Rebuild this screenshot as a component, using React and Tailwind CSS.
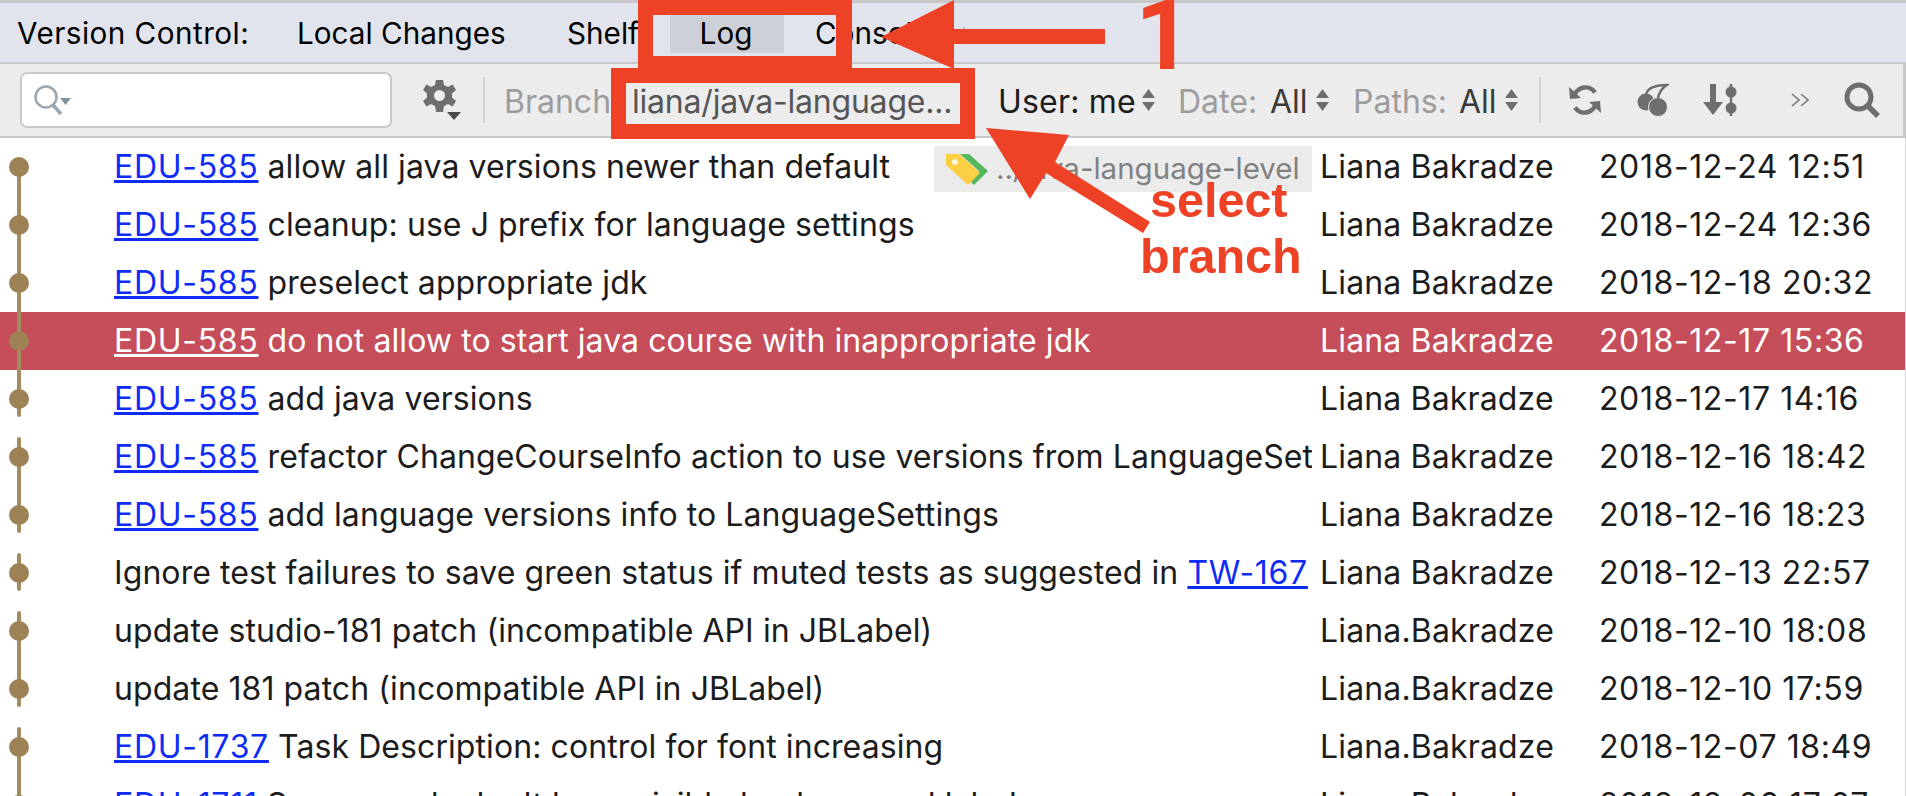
import React from "react";

const rows = [
  { l: "EDU-585", t: "allow all java versions newer than default", a: "Liana Bakradze", d: "2018-12-24 12:51", up: 0, dn: 2, tag: true },
  { l: "EDU-585", t: "cleanup: use J prefix for language settings", a: "Liana Bakradze", d: "2018-12-24 12:36", up: 2, dn: 2 },
  { l: "EDU-585", t: "preselect appropriate jdk", a: "Liana Bakradze", d: "2018-12-18 20:32", up: 2, dn: 2 },
  { l: "EDU-585", t: "do not allow to start java course with inappropriate jdk", a: "Liana Bakradze", d: "2018-12-17 15:36", up: 2, dn: 2, sel: true },
  { l: "EDU-585", t: "add java versions", a: "Liana Bakradze", d: "2018-12-17 14:16", up: 2, dn: 1 },
  { l: "EDU-585", t: "refactor ChangeCourseInfo action to use versions from LanguageSettings", a: "Liana Bakradze", d: "2018-12-16 18:42", up: 1, dn: 2 },
  { l: "EDU-585", t: "add language versions info to LanguageSettings", a: "Liana Bakradze", d: "2018-12-16 18:23", up: 2, dn: 1 },
  { t: "Ignore test failures to save green status if muted tests as suggested in", l2: "TW-167", a: "Liana Bakradze", d: "2018-12-13 22:57", up: 1, dn: 1 },
  { t: "update studio-181 patch (incompatible API in JBLabel)", a: "Liana.Bakradze", d: "2018-12-10 18:08", up: 1, dn: 2 },
  { t: "update 181 patch (incompatible API in JBLabel)", a: "Liana.Bakradze", d: "2018-12-10 17:59", up: 2, dn: 1 },
  { l: "EDU-1737", t: "Task Description: control for font increasing", a: "Liana.Bakradze", d: "2018-12-07 18:49", up: 1, dn: 2 },
  { l: "EDU-1711", t: "Some words don't have visible hyphens and labels", a: "Liana.Bakradze", d: "2018-12-06 17:07", up: 2, dn: 2 },
];

function Graph({ up, dn }) {
  const c = "#a38d60";
  return (
    <svg width="40" height="58" className="block shrink-0">
      {up === 2 && <line x1="19" x2="19" y1="0" y2="29" stroke={c} strokeWidth="4" />}
      {up === 1 && <line x1="19" x2="19" y1="11" y2="29" stroke={c} strokeWidth="4" strokeLinecap="round" />}
      {dn === 2 && <line x1="19" x2="19" y1="29" y2="58" stroke={c} strokeWidth="4" />}
      {dn === 1 && <line x1="19" x2="19" y1="29" y2="45" stroke={c} strokeWidth="4" strokeLinecap="round" />}
      <circle cx="19" cy="29" r="10" fill="#9c8254" />
    </svg>
  );
}

function TagIcon() {
  return (
    <svg width="44" height="32" viewBox="0 0 44 32" className="shrink-0">
      <path d="M15 1 L24 1 L43 18 L29 32 L24 27 L34 18 Z" fill="#55b85f" />
      <path d="M1 1 L14 1 L35 20 L23 32 L1 12 Z" fill="#fdd043" />
      <circle cx="10" cy="9" r="3" fill="#f7f3de" />
    </svg>
  );
}

function UpDown() {
  return (
    <svg width="13" height="24" viewBox="0 0 13 24" className="block shrink-0">
      <path d="M6.5 1 L13 10 L0 10 Z M0 14 L13 14 L6.5 23 Z" fill="#6e6e6e" />
    </svg>
  );
}

function Row({ r }) {
  const linkCls = r.sel ? "underline text-white tracking-[0.7px]" : "underline text-[#0f2cf5] tracking-[0.7px]";
  return (
    <div className={`flex items-center h-[58px] shrink-0 ${r.sel ? "bg-[#c64e5b] text-white" : "text-[#1c1c1c]"}`}>
      <div className="w-[114px] shrink-0">
        <Graph up={r.up} dn={r.dn} />
      </div>
      <div className="relative w-[1198px] shrink-0 overflow-hidden whitespace-nowrap h-[58px] leading-[58px] tracking-[0.08px]">
        {r.l && <span className={linkCls}>{r.l}</span>}
        {r.l && " "}
        {r.t}
        {r.l2 && " "}
        {r.l2 && <span className={linkCls}>{r.l2}</span>}
        {r.tag && (
          <div className="absolute right-0 top-[8px] h-[46px] w-[378px] bg-[#ebebeb] flex items-center pl-[11px] text-[#808080] leading-none text-[29.5px] tracking-normal">
            <TagIcon />
            <span className="ml-[7px]">../java-language-level</span>
          </div>
        )}
      </div>
      <div className="w-[279px] ml-[8px] shrink-0 leading-[58px] whitespace-nowrap tracking-[0.15px]">{r.a}</div>
      <div className="shrink-0 leading-[58px] whitespace-nowrap tracking-[0.6px]">{r.d}</div>
    </div>
  );
}

function Annotations() {
  const red = "#ee4227";
  return (
    <>
      <svg width="1906" height="796" className="absolute left-0 top-0 pointer-events-none">
        <path fillRule="evenodd" fill={red} d="M638 0 H852 V69 H638 Z M653 15 V56 H836 V15 Z" />
        <path fillRule="evenodd" fill={red} d="M611 68 H975 V139 H611 Z M626 83 V124 H960 V83 Z" />
        <polygon fill={red} points="881,37 954,0 954,69" />
        <rect fill={red} x="950" y="29" width="155" height="15" />
        <polygon fill={red} points="986,128 1069,135 1055,162 1150,222 1143,233 1046,173 1030,199" />
      </svg>
      <div className="absolute left-[1135px] top-[-23px] text-[#ee4227] font-bold text-[100px] leading-[115px] [font-family:Roboto,sans-serif]">1</div>
      <div className="absolute left-[1150px] top-[173px] text-[#ee4227] font-bold text-[48.5px] leading-[55px] [font-family:'Liberation_Sans',sans-serif]">select</div>
      <div className="absolute left-[1140px] top-[229px] text-[#ee4227] font-bold text-[48.5px] leading-[55px] [font-family:'Liberation_Sans',sans-serif]">branch</div>
    </>
  );
}

export default function App() {
  return (
    <div className="relative w-[1906px] h-[796px] overflow-hidden bg-white text-[32px] [font-family:Inter,sans-serif] flex flex-col">
      {/* tab bar */}
      <div className="h-[64px] shrink-0 bg-[#e1e4ec] border-t-[3px] border-b-2 border-[#c8c8c8] flex items-center text-black text-[29.7px]">
        <div className="ml-[17px] w-[249px] shrink-0 whitespace-nowrap pt-[2px] tracking-[0.45px]">Version Control:</div>
        <div className="pl-[31px] w-[270px] h-[41px] flex items-center whitespace-nowrap pt-[2px]">Local Changes</div>
        <div className="pl-[31px] w-[134px] h-[41px] flex items-center whitespace-nowrap pt-[2px]">Shelf</div>
        <div className="w-[114px] h-[41px] flex items-center justify-center bg-[#cdd0d6] whitespace-nowrap pt-[2px] pr-[2px]">Log</div>
        <div className="pl-[31px] h-[41px] w-[165px] flex items-center whitespace-nowrap pt-[2px]">Console</div>
        <svg width="12" height="14" className="ml-[5px]"><path d="M1 13 L11 1" stroke="#b5b8bf" strokeWidth="1.5" /></svg>
      </div>

      {/* toolbar */}
      <div className="h-[74px] shrink-0 bg-[#ececec] border-b-2 border-r-[3px] border-[#c8c8c8] flex items-center whitespace-nowrap">
        <div className="ml-[20px] w-[372px] h-[56px] bg-white border-2 border-[#c9c9c9] rounded-[7px] flex items-center pl-[10px] shrink-0">
          <svg width="42" height="34" viewBox="0 0 42 34">
            <circle cx="14" cy="14" r="10.5" fill="none" stroke="#9aa7b0" strokeWidth="2.5" />
            <path d="M21 22 L29 31" stroke="#9aa7b0" strokeWidth="3.5" />
            <path d="M28 15 H39 L33.5 22 Z" fill="#84939c" />
          </svg>
        </div>
        <svg width="40" height="42" viewBox="0 0 40 42" className="ml-[31px] shrink-0">
          <g fill="#6e6e6e">
            <path fillRule="evenodd" d="M13 1 H20 L21 6 L25 8 L29.5 5.5 L33 11 L29 14.5 V18.5 L33 22 L29.5 27.5 L25 25 L21 27 L20 33 H13 L12 27 L8 25 L3.5 27.5 L0 22 L4 18.5 V14.5 L0 11 L3.5 5.5 L8 8 L12 6 Z M16.5 11 A5.5 5.5 0 1 0 16.50 22 A5.5 5.5 0 1 0 16.5 11 Z" />
          </g>
          <path d="M24 33 H38 L31 41 Z" fill="#4a4a4a" />
        </svg>
        <div className="ml-[20px] w-[2px] h-[46px] bg-[#d2d2d2] shrink-0" />
        <div className="ml-[19px] w-[107px] overflow-hidden text-[#9c9c9c] shrink-0 pt-[3px]">Branch:</div>
        <div className="ml-[21px] w-[331px] text-[#555555] shrink-0 tracking-[-0.2px] pt-[3px]">liana/java-language...</div>
        <div className="ml-[35px] w-[135px] text-[#1c1c1c] shrink-0 pt-[3px] tracking-[0.2px]">User: me</div>
        <div className="ml-[9px] shrink-0"><UpDown /></div>
        <div className="ml-[23px] w-[79px] text-[#9c9c9c] shrink-0 pt-[3px]">Date:</div>
        <div className="ml-[13px] w-[36px] text-[#3a3a3a] shrink-0 pt-[3px]">All</div>
        <div className="ml-[10px] shrink-0"><UpDown /></div>
        <div className="ml-[24px] w-[93px] text-[#9c9c9c] shrink-0 pt-[3px]">Paths:</div>
        <div className="ml-[13px] w-[36px] text-[#3a3a3a] shrink-0 pt-[3px]">All</div>
        <div className="ml-[10px] shrink-0"><UpDown /></div>
        <div className="ml-[21px] w-[2px] h-[46px] bg-[#d2d2d2] shrink-0" />
        <svg width="32" height="32" viewBox="0 0 32 32" className="ml-[28px] shrink-0">
          <path d="M5 14 A11.5 11.5 0 0 1 26 8.5" fill="none" stroke="#6e6e6e" strokeWidth="4.5" />
          <path d="M0 3 L1 15 L12 14 Z" fill="#6e6e6e" />
          <path d="M27 18 A11.5 11.5 0 0 1 6 23.5" fill="none" stroke="#6e6e6e" strokeWidth="4.5" />
          <path d="M32 29 L31 17 L20 18 Z" fill="#6e6e6e" />
        </svg>
        <svg width="32" height="34" viewBox="0 0 32 34" className="ml-[36px] shrink-0">
          <circle cx="9" cy="19" r="8.5" fill="#6e6e6e" />
          <circle cx="21" cy="24" r="9.5" fill="#6e6e6e" stroke="#ececec" strokeWidth="1" />
          <path d="M9 11 C11 5 18 2 30 2 C25 5 22 10 21 15" fill="none" stroke="#6e6e6e" strokeWidth="2.5" />
        </svg>
        <svg width="34" height="32" viewBox="0 0 34 32" className="ml-[34px] shrink-0">
          <path d="M7 0 H13 V18 H20 L10 31 L0 18 H7 Z" fill="#6e6e6e" />
          <path d="M28 0 V32" stroke="#6e6e6e" strokeWidth="2.5" />
          <circle cx="28" cy="8" r="5.5" fill="#6e6e6e" />
          <circle cx="28" cy="24" r="5.5" fill="#6e6e6e" />
        </svg>
        <svg width="18" height="16" viewBox="0 0 18 16" className="ml-[54px] shrink-0">
          <path d="M1 2 L8 8 L1 14 M10 2 L17 8 L10 14" fill="none" stroke="#777777" strokeWidth="1.6" />
        </svg>
        <svg width="36" height="36" viewBox="0 0 36 36" className="ml-[35px] shrink-0">
          <circle cx="15" cy="15" r="12" fill="none" stroke="#6e6e6e" strokeWidth="5" />
          <path d="M24 24 L34 34" stroke="#6e6e6e" strokeWidth="5.5" />
        </svg>
      </div>

      {/* log */}
      <div className="flex flex-col border-r border-[#d8d8d8] flex-1 overflow-hidden">
        {rows.map((r, i) => (
          <Row key={i} r={r} />
        ))}
      </div>

      <Annotations />
    </div>
  );
}
